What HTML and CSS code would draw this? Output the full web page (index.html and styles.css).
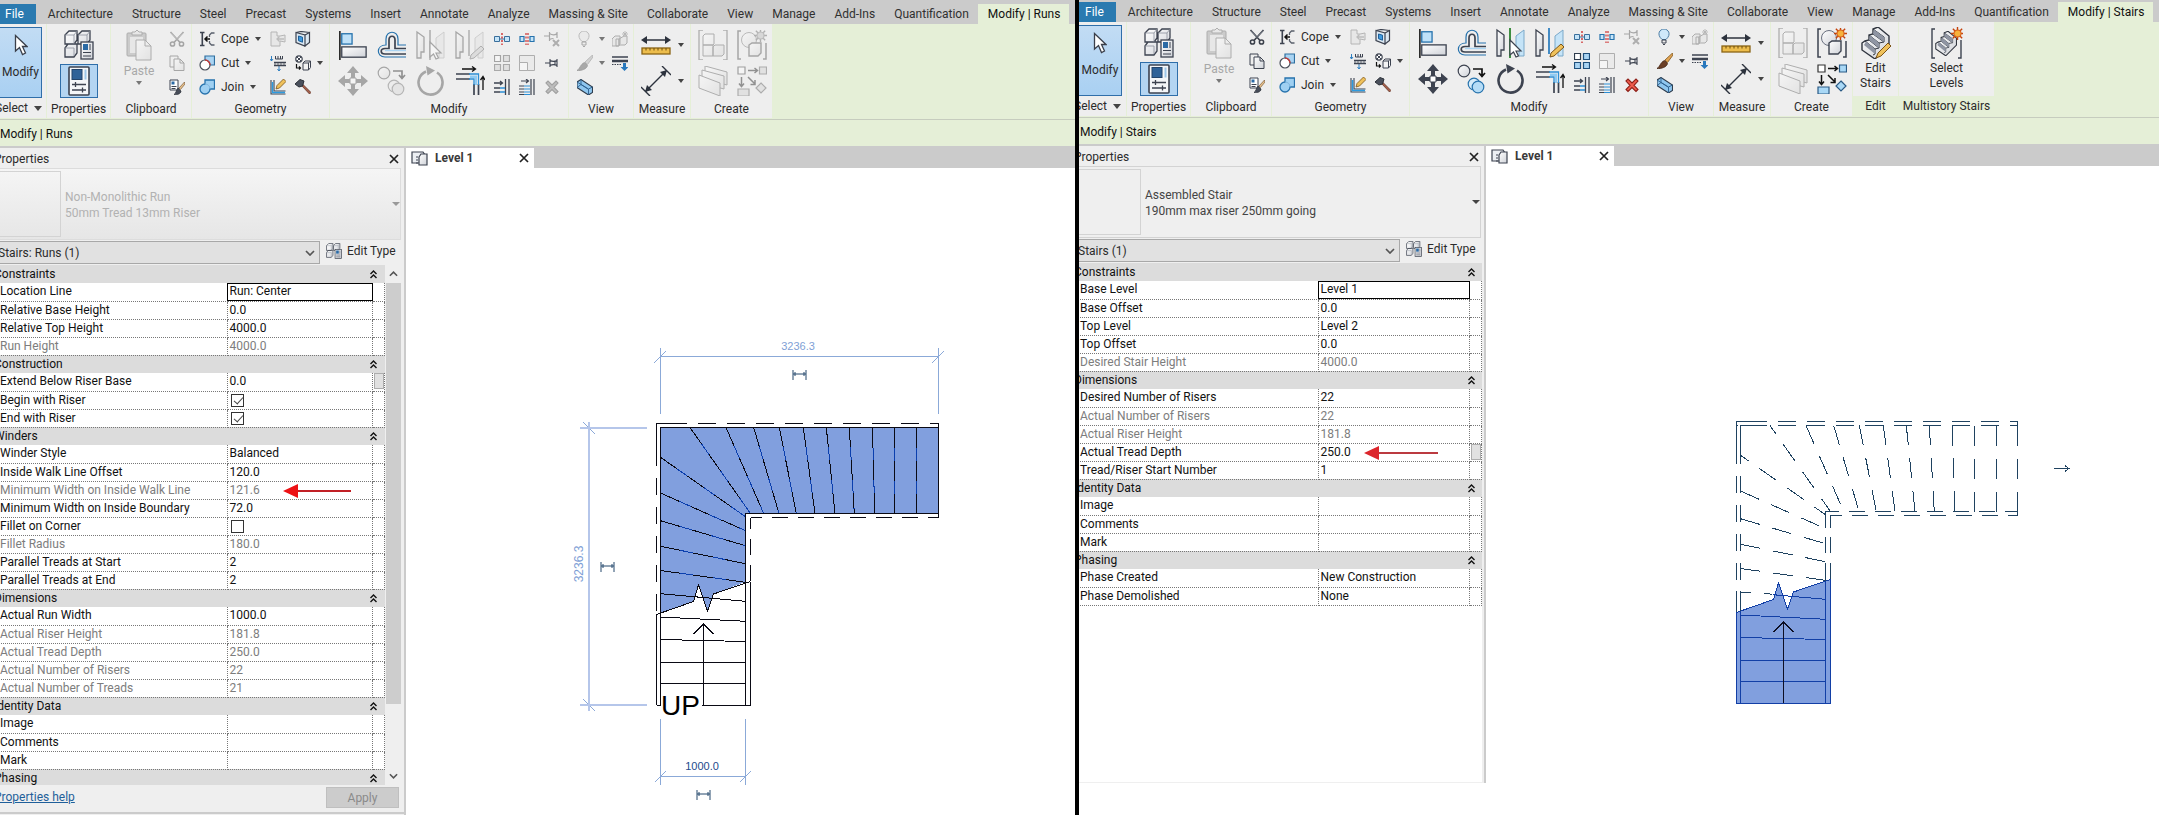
FILE: index.html
```html
<!DOCTYPE html>
<html lang="en">
<head>
<meta charset="utf-8">
<title>Modify Runs and Stairs</title>
<link rel="stylesheet" href="styles.css">
</head>
<body>
<svg class="defs" aria-hidden="true">
<defs>
<linearGradient id="g" x1="0" y1="0" x2="1" y2="1"><stop offset="0" stop-color="#fff"/><stop offset="1" stop-color="#cfd2d8"/></linearGradient>
<symbol id="cursor" viewBox="0 0 14 22"><path d="M1.500 1.500V17l4-3.500 3 7 3-1.500-3-6.500H13z" fill="#fff" stroke="#3a3f4a" stroke-width="1.300"/></symbol>
<symbol id="cubes" viewBox="0 0 30 30"><g fill="url(#g)" stroke="#3d4350" stroke-width="1.300"><path d="M1 5l4-4h8v9l-3 4H1zM14 5l4-4h8v9l-3 4h-9zM1 18l3-4h9v9l-3 4H1z"/><path d="M1 5h9v9M10 5l3-4M14 5h9v9M23 5l3-4M1 18h9v8" fill="none" stroke="#8a909c" stroke-width=".8"/><rect x="17" y="12" width="12" height="17"/></g><rect x="19" y="14" width="5" height="6" fill="#2b6aa5"/><path d="M26 14v6M19 22.500h8M19 26h8" stroke="#3d4350"/></symbol>
<symbol id="propsheet" viewBox="0 0 22 30"><rect x="1" y="1" width="20" height="28" rx="1" fill="#f4f6f8" stroke="#3d4350" stroke-width="1.600"/><rect x="4" y="3.500" width="10" height="10" fill="#2f6298" stroke="#24456b"/><path d="M16.500 3.500h2v10h-2z" fill="#9dc6e8"/><path d="M4 18.500h14M7.500 16v5M4 24h14M14.500 21.500v5" stroke="#3d4350" stroke-width="1.300"/></symbol>
<symbol id="paste" viewBox="0 0 28 32"><rect x="2" y="4" width="19" height="23" rx="1" fill="#9a9a9a" stroke="#555"/><path d="M7 6V3h3l2-2 2 2h3v3z" fill="#ddd" stroke="#555"/><path d="M5 8h13v16H5z" fill="#ddd"/><path d="M11 11h9l6 6v14H11z" fill="url(#g)" stroke="#555"/><path d="M20 11v6h6" fill="none" stroke="#555"/></symbol>
<symbol id="cut" viewBox="0 0 16 16"><path d="M1.500 1l9.500 10.500M14.500 1L5 11.500" stroke="#3a3f4a" stroke-width="1.600"/><path d="M2 1.500l6 7 6-7" fill="none" stroke="#9aa0aa" stroke-width=".6"/><circle cx="3.500" cy="13" r="2.100" fill="none" stroke="#3a3f4a" stroke-width="1.500"/><circle cx="12.500" cy="13" r="2.100" fill="none" stroke="#3a3f4a" stroke-width="1.500"/></symbol>
<symbol id="copy" viewBox="0 0 16 16"><path d="M1 1h8v11H1z" fill="#eee" stroke="#3d4350"/><path d="M5 4h6l4 4v7.500H5z" fill="url(#g)" stroke="#3d4350"/><path d="M11 4v4h4" fill="none" stroke="#3d4350"/></symbol>
<symbol id="match" viewBox="0 0 16 16"><path d="M1 1h8v10H1z" fill="#fff" stroke="#3d4350"/><path d="M2.500 2.500h3v3h-3z" fill="#2b6aa5"/><path d="M2.500 7.500h5M2.500 9.500h4" stroke="#3d4350"/><path d="M15.500 3L10 9l1.500 1.500L16 5z" fill="#e7c08a" stroke="#6a4a28" stroke-width=".6"/><path d="M9 9l3 3c0 3-4 4-7 3.500 2-1 2-4 4-6.500z" fill="#474d59" stroke="#2a2e36" stroke-width=".7"/></symbol>
<symbol id="cope" viewBox="0 0 16 16"><path d="M1 1.500h4.500M1 14.500h4.500M3.300 1.500v13" stroke="#3d4350" stroke-width="1.600"/><path d="M6 8h5M8.500 5.500L6 8l2.500 2.500" fill="none" stroke="#111" stroke-width="1.500"/><path d="M15.500 2h-3l-2 2v2M15.500 14h-3l-2-2v-2" fill="none" stroke="#5a606c" stroke-width="1.300"/></symbol>
<symbol id="cutg" viewBox="0 0 16 16"><path d="M6 1h9.500v9H6z" fill="#a9d4f3" stroke="#2f6f9f" stroke-width="1.200"/><circle cx="6" cy="10" r="5" fill="#fff" stroke="#4a4f5a" stroke-width="1.200"/><path d="M6 5a5 5 0 0 1 5 5" fill="none" stroke="#c23b3b" stroke-width="1.300"/></symbol>
<symbol id="join" viewBox="0 0 16 16"><path d="M6 1h9.500v9H11a5 5 0 1 1-5-5z" fill="#9fd0f2" stroke="#2773ad" stroke-width="1.300"/><path d="M6 5c3 0 5 2 5 5" fill="none" stroke="#7fb6de"/></symbol>
<symbol id="wallnotch" viewBox="0 0 16 16"><path d="M1 1h6v4h3l5-1v7l-5-1v5H1z" fill="#ddd" stroke="#666"/><path d="M14 8H7m2.500-2.500L7 8l2.500 2.500" stroke="#777" fill="none" stroke-width="1.300"/></symbol>
<symbol id="beam" viewBox="0 0 16 16"><path d="M1.500 1v5M0 4l1.500 2L3 4M9 11v5M7.500 14L9 16l1.500-2" stroke="#2d7fc1" fill="none"/><path d="M5.500 1v3h7V1M8 1v3M10.500 1v3" fill="none" stroke="#3d4350"/><path d="M4 7.500h12M4 10.500h12" stroke="#3d4350" stroke-width="1.300"/><path d="M4 9h12" stroke="#3d4350" stroke-width=".7" stroke-dasharray="2 1"/></symbol>
<symbol id="walljoin" viewBox="0 0 16 16"><path d="M1 1v14h14.500M4 1v11h11.500" fill="none" stroke="#3d4350" stroke-width="1.100"/><path d="M2.500 3v10.500H15" fill="none" stroke="#2d9be0" stroke-width="1.500"/><path d="M6 10l1-3.500L13.500 0 16 2.500 9.500 9z" fill="#efc15b" stroke="#7c5418" stroke-width=".8"/></symbol>
<symbol id="splitface" viewBox="0 0 16 16"><path d="M1 1.500L10 4v11L1 11.500zM10 4l4.500-2.500v10L10 15zM1 1.500L6 .5l8.500 1" fill="#dce8f2" stroke="#3d4350" stroke-width="1.200"/><path d="M3.500 5l4 1.200v5l-4-1.500z" fill="#3f9be0" stroke="#1e5f99"/></symbol>
<symbol id="solid" viewBox="0 0 16 16"><circle cx="4" cy="4" r="3.200" fill="#fff" stroke="#3d4350" stroke-width="1.200"/><path d="M2 2l4 4M6 2L2 6" stroke="#3d4350"/><path d="M1.500 9v4h4M4 11.500L5.500 13 4 14.500" fill="none" stroke="#111" stroke-width="1.200"/><path d="M8 8l2-2h5.500v6.500l-2 2.500H8zM8 8h5.500v7M13.500 8l2-2" fill="#f4f4f4" stroke="#3d4350"/></symbol>
<symbol id="hammer" viewBox="0 0 16 16"><path d="M6 6l8.500 9 1.500-1.500L7.500 5z" fill="#a9604a" stroke="#5d3528" stroke-width=".8"/><path d="M0 5L5 .5 9 2 7.500 7 4 8z" fill="#4a505c" stroke="#2c3038"/></symbol>
<symbol id="align" viewBox="0 0 30 32"><path d="M1 1v31" stroke="#111" stroke-width="1.600"/><rect x="3" y="4" width="11" height="11" fill="#bfe1f8" stroke="#2773ad" stroke-width="1.400"/><rect x="3" y="18" width="26" height="11" fill="url(#g)" stroke="#3d4350" stroke-width="1.400"/></symbol>
<symbol id="offset" viewBox="0 0 30 30"><g fill="none"><path d="M29 15h-8v-6c0-9-12-9-12 0v6C-1 15-1 27 8 27h21" stroke="#2773ad" stroke-width="1.200"/><path d="M29 18.500H18V10c0-5-6-5-6 0v8.500H8c-5 0-5 5.500 0 5.500h21" stroke="#3d4350" stroke-width="1.700"/><path d="M29 20.500H8" stroke="#a9d4f3" stroke-width="1.400"/></g></symbol>
<symbol id="mirrorp" viewBox="0 0 30 30"><path d="M1 2l7 5v15H5v6H1z" fill="url(#g)" stroke="#3d4350" stroke-width="1.300"/><path d="M28 2l-8 6v15h3v5h5z" fill="#c5e4f8" stroke="#7aa9c9"/><path d="M14 0v30" stroke="#3e8e41" stroke-width="2"/><path d="M14 12v15l3.500-3 2.500 5 2.500-1-2.500-5h5z" fill="#fff" stroke="#3d4350" stroke-width="1.200"/></symbol>
<symbol id="mirrord" viewBox="0 0 30 30"><path d="M1 2l7 5v15H5v6H1z" fill="url(#g)" stroke="#3d4350" stroke-width="1.300"/><path d="M28 2l-8 6v15h3v5h5z" fill="#c5e4f8" stroke="#7aa9c9"/><path d="M14 0v26" stroke="#2f7fbf" stroke-width="1.800"/><path d="M15 29l1-4 10-9 3 3-10 9z" fill="#efc15b" stroke="#7c5418"/></symbol>
<symbol id="move" viewBox="0 0 30 30"><path d="M15 0l6 7h-4v5h-4V7H9zM15 30l6-7h-4v-5h-4v5H9zM0 15l7-6v4h5v4H7v4zM30 15l-7-6v4h-5v4h5v4z" fill="#3d4350"/><path d="M12 12h6v6h-6z" fill="#fff" stroke="#3d4350"/></symbol>
<symbol id="copym" viewBox="0 0 30 30"><circle cx="7" cy="7" r="5.800" fill="url(#g)" stroke="#3d4350" stroke-width="1.200"/><path d="M16 5h9v6M22 9l3 3.500L28 9" fill="none" stroke="#111" stroke-width="1.700"/><circle cx="17" cy="20" r="5.800" fill="#d6ecfa" stroke="#2773ad" stroke-width="1.200"/><circle cx="21" cy="23" r="5.800" fill="#b5dcf6" stroke="#2773ad" stroke-width="1.200"/></symbol>
<symbol id="rotate" viewBox="0 0 30 30"><path d="M21 6.500A12 12 0 1 1 10 5.500" fill="none" stroke="#3d4350" stroke-width="2.600"/><path d="M10 0l9 4.500-7.500 5z" fill="#3d4350"/></symbol>
<symbol id="trim" viewBox="0 0 30 30"><path d="M1 8h14M1 13h14M19 18v11M23.500 18v11" stroke="#3d4350" stroke-width="1.700"/><path d="M14 8h9.500v11M14 13h5v6" fill="none" stroke="#2d8fd5" stroke-width="1.300"/><path d="M15 9.500h7V19h-2v-7h-5z" fill="#8fcbf3"/><path d="M7 3h13M17 .5L20.500 3 17 5.500M28 24V11M25.500 14l2.500-3.500L30 14" fill="none" stroke="#111" stroke-width="1.300"/></symbol>
<symbol id="split" viewBox="0 0 16 16"><path d="M.5 5.500h5v5h-5zM10.500 5.500h5v5h-5z" fill="#c5e4f8" stroke="#3a6f9c"/><path d="M6 8h4" stroke="#3a6f9c"/><path d="M8 2v12" stroke="#c22" stroke-dasharray="2 1.500" stroke-width="1.300"/></symbol>
<symbol id="splitgap" viewBox="0 0 16 16"><path d="M1 5.500h4v5H1zM11 5.500h4v5h-4z" fill="#c5e4f8" stroke="#2773ad" stroke-width="1.200"/><path d="M7 2v12M9 2v12" stroke="#c22" stroke-dasharray="2 1.500" stroke-width="1.100"/></symbol>
<symbol id="array" viewBox="0 0 16 16"><path d="M.5.500h6v6h-6z" fill="#fff" stroke="#2f3c4c" stroke-width="1.200"/><path d="M9.500.500h6v6h-6zM.5 9.500h6v6h-6zM9.500 9.500h6v6h-6z" fill="#a9d4f3" stroke="#20507c" stroke-width="1.200"/></symbol>
<symbol id="scale" viewBox="0 0 16 16"><path d="M.5.500h15v15h-15z" fill="#e4e4e4" stroke="#555"/><path d="M.5 7.500h8v8h-8z" fill="#fff" stroke="#555"/></symbol>
<symbol id="trims" viewBox="0 0 16 16"><path d="M0 4h8M6 2l2.500 2L6 6M0 9h6M0 13h6M11.500 0v16M15 0v16" fill="none" stroke="#3d4350" stroke-width="1.300"/><path d="M6 9h5M6 13h5" stroke="#2d8fd5" stroke-width="1.500"/></symbol>
<symbol id="trimm" viewBox="0 0 16 16"><path d="M2 2h7M7 0l2.500 2L7 4M0 7h5M0 10h5M0 13h5M0 15.500h5M12 0v16M15 0v16" fill="none" stroke="#3d4350" stroke-width="1.200"/><path d="M5 7h6M5 10h6M5 13h6M5 15.500h6" stroke="#2d8fd5" stroke-width="1.200"/></symbol>
<symbol id="pin" viewBox="0 0 16 16"><path d="M1 8h5M6 4v8M13 4v8M6 5.500c2 1 5 1 7 0M6 10.500c2-1 5-1 7 0M11 6v4" fill="none" stroke="#3d4350" stroke-width="1.100"/></symbol>
<symbol id="unpin" viewBox="0 0 16 16"><path d="M0 5h5M5.500 1v9M13 1v6M5.500 2.500c3 2 5 2 7.500 0M5.500 8.500c2-1 3-1 4-1" fill="none" stroke="#444" stroke-width="1.200"/><path d="M9 9l6 6M15 9l-6 6" stroke="#555" stroke-width="2"/></symbol>
<symbol id="del" viewBox="0 0 16 16"><path d="M2 4l2-2 4 4 4-4 2 2-4 4.300 4 4.200-2 2-4-4-4 4-2-2 4-4.200z" fill="#ef5c4d" stroke="#8e2018" stroke-width="1.100"/></symbol>
<symbol id="bulb" viewBox="0 0 16 16"><path d="M5 10.500C-1 5 3 0 7 0s8 5 2 10.500z" fill="#cfe8fa" stroke="#4a7ba3"/><path d="M5 11h4v3H5zM6 15.500h2" fill="#eee" stroke="#3d4350"/></symbol>
<symbol id="displace" viewBox="0 0 16 16"><path d="M0 8l3-3h5v8l-1.500 2H0zM4 8h3v7H4zM7 8l5-3h3v7l-2 2H7z" fill="#ddd" stroke="#555"/><path d="M13 0v6M10 3h6M11 1l4 4M15 1l-4 4" stroke="#666" stroke-width=".9"/></symbol>
<symbol id="brush" viewBox="0 0 16 16"><path d="M15.500 0L8 7l2.500 2.500L16 2z" fill="#e2a455" stroke="#7c5418" stroke-width=".8"/><path d="M7.500 7.500l3 3C10 14 4 16 0 15.500c3-1.500 3-6 7.500-8z" fill="#6b3f27" stroke="#412313" stroke-width=".8"/></symbol>
<symbol id="linework" viewBox="0 0 16 16"><path d="M0 2h16" stroke="#3d4350" stroke-width="1.500"/><path d="M0 6h16" stroke="#3d4350" stroke-width="2.500"/><path d="M0 9.500h9" stroke="#3d4350" stroke-dasharray="1.500 1"/><path d="M11 8h3v4h2.500l-4 4-4-4H11z" fill="#2878bd"/></symbol>
<symbol id="box3d" viewBox="0 0 16 16"><path d="M0 3L4 .500 15.500 8v5.500L11.500 16 0 8.500z" fill="#8ec6ef" stroke="#2f3c4c" stroke-width="1.100"/><path d="M0 3l11.500 7 4-2M11.500 10v6M4 .500v5l-4 3M4 5.500l7 4.500" fill="none" stroke="#2b5e8c" stroke-width=".9"/></symbol>
<symbol id="measure" viewBox="0 0 30 30"><path d="M2 10h26" stroke="#2c323d" stroke-width="1.500"/><path d="M0 10l6-4v8zM30 10l-6-4v8z" fill="#2c323d"/><rect x="1" y="18" width="28" height="6" fill="#edbd4c" stroke="#8a6415" stroke-width="1.300"/><path d="M5 18v2.500M9 18v2.500M13 18v2.500M17 18v2.500M21 18v2.500M25 18v2.500" stroke="#6e4e0d"/></symbol>
<symbol id="dim" viewBox="0 0 30 30"><path d="M5 25L25 5M0 21l9 9M21 0l9 9" stroke="#2c323d" stroke-width="1.400"/><path d="M4 26l2-7 5 5zM26 4l-2 7-5-5z" fill="#2c323d"/></symbol>
<symbol id="group" viewBox="0 0 30 30"><path d="M5 0H1v30h4M25 0h4v30h-4" fill="none" stroke="#555" stroke-width="1.300"/><path d="M5 6l2-2h9v10l-1 1H5zM5 15h10v11H5zM15 17l2-2h9v9l-2 2h-9z" fill="url(#g)" stroke="#555"/></symbol>
<symbol id="similar" viewBox="0 0 30 30"><path d="M4 1H1v28h3M26 29h3V13" fill="none" stroke="#3d4350" stroke-width="1.500"/><circle cx="12" cy="10" r="7.500" fill="url(#g)" stroke="#6a7080"/><path d="M12 15l3-2h9v10l-3 3h-9z" fill="url(#g)" stroke="#3d4350" stroke-width="1.400"/><use href="#spark" x="17" y="-1" width="13" height="13"/></symbol>
<symbol id="spark" viewBox="0 0 14 14"><path d="M7 0v14M0 7h14M2 2l10 10M12 2L2 12" stroke="#c4420c" stroke-width="1.500"/><circle cx="7" cy="7" r="3.800" fill="#f7b23c" stroke="#d8611a" stroke-width="1.200"/></symbol>
<symbol id="assembly" viewBox="0 0 30 30"><g fill="url(#g)" stroke="#555"><path d="M7 0l22 6v13L7 13z"/><path d="M4 4l22 6v13L4 17z"/><path d="M1 9l21 8v13L1 22z" /></g></symbol>
<symbol id="flow" viewBox="0 0 30 30"><path d="M1 1h7v7H1z" fill="#fff" stroke="#333" stroke-width="1.200"/><path d="M11 4.500h9M17.500 2l3 2.500-3 2.500M4.500 11v9M2 17.500l2.500 3 2.500-3M11 11l7 7M18 14v4.500h-4.500" fill="none" stroke="#111" stroke-width="1.500"/><path d="M22.500 1h7v7h-7zM1 23h11v7H1zM24 17l5 5-5 5-5-5z" fill="#a9d8f6" stroke="#2a5a85" stroke-width="1.200"/></symbol>
<symbol id="stairs" viewBox="0 0 30 32"><path d="M1 16L1 23 14 32 28 18V9L17 0 12 2v5l-4 1v5l-4 1z" fill="url(#g)" stroke="#30353f" stroke-width="1.400"/><path d="M12 2l11 8v5l-5 1v5l-4 1v5l-2 1M12 7l11 8M8 8l10 8M8 13l10 8M4 14l10 8" fill="none" stroke="#30353f"/><path d="M13 2.500l10 7.500v5l-11-8zM9 8.500l9 7.500v5L8 13zM5 14.500l9 7.500v5L3 18z" fill="#8f95a3"/></symbol>
<symbol id="editstairs" viewBox="0 0 30 32"><use href="#stairs" width="30" height="32"/><path d="M15 31l2-5 10-10 3 3-10 10z" fill="#efc15b" stroke="#7c5418"/></symbol>
<symbol id="levels" viewBox="0 0 32 32"><path d="M4 2H1v29h3M27 31h3V13" fill="none" stroke="#3d4350" stroke-width="1.400"/><use href="#stairs" x="4" y="4" width="23" height="25"/><use href="#spark" x="20" y="0" width="13" height="13"/></symbol>
<symbol id="plan" viewBox="0 0 17 15"><path d="M1 1h11l2 3v8H1z" fill="#eceff3" stroke="#3d4350" stroke-width="1.200"/><path d="M8 6l2-3h6v11H8z" fill="url(#g)" stroke="#3d4350" stroke-width="1.200"/><path d="M6 5v8" stroke="#3d4350" stroke-dasharray="2 1"/></symbol>
<symbol id="x" viewBox="0 0 10 10"><path d="M1 1l8 8M9 1L1 9" stroke="#222" stroke-width="1.700"/></symbol>
<symbol id="chev" viewBox="0 0 10 6"><path d="M1 1l4 4 4-4" fill="none" stroke="#555" stroke-width="1.700"/></symbol>
<symbol id="fold" viewBox="0 0 7 9"><path d="M.5 4l3-3 3 3M.5 8l3-3 3 3" fill="none" stroke="#111" stroke-width="1.400"/></symbol>
<symbol id="hdim" viewBox="0 0 15 11"><path d="M1 0v10M14 0v10M1 4h13M3 2v4M12 2v4" stroke="#24496d" fill="none"/></symbol>
</defs>
</svg>

<main class="compare">
<section class="app" aria-label="Modify Runs">
<nav class="tabs"><button class="file">File</button><button>Architecture</button><button>Structure</button><button>Steel</button><button>Precast</button><button>Systems</button><button>Insert</button><button>Annotate</button><button>Analyze</button><button>Massing &amp; Site</button><button>Collaborate</button><button>View</button><button>Manage</button><button>Add-Ins</button><button>Quantification</button><button class="on">Modify | Runs</button></nav>
<div class="ribbon">
<section class="group select"><div class="tools"><button class="modify"><svg><use href="#cursor"/></svg>Modify</button></div><h2>Select <i class="tri"></i></h2></section>
<section class="group props"><div class="tools"><div class="big"><button aria-label="Type properties"><svg><use href="#cubes"/></svg></button><button class="pressed" aria-label="Properties"><svg><use href="#propsheet"/></svg></button></div></div><h2>Properties</h2></section>
<section class="group clip"><div class="tools"><button class="paste off"><svg><use href="#paste"/></svg>Paste<i class="tri"></i></button><div class="small"><button class="off" aria-label="Cut"><svg><use href="#cut"/></svg></button><button class="off" aria-label="Copy"><svg><use href="#copy"/></svg></button><button aria-label="Match"><svg><use href="#match"/></svg></button></div></div><h2>Clipboard</h2></section>
<section class="group geom"><div class="tools"><div class="small named"><button><svg><use href="#cope"/></svg>Cope<i class="tri"></i></button><button><svg><use href="#cutg"/></svg>Cut<i class="tri"></i></button><button><svg><use href="#join"/></svg>Join<i class="tri"></i></button></div><div class="small"><button class="off" aria-label="Wall opening"><svg><use href="#wallnotch"/></svg></button><button aria-label="Beam joins"><svg><use href="#beam"/></svg></button><button aria-label="Wall joins"><svg><use href="#walljoin"/></svg></button></div><div class="small"><button aria-label="Split face"><svg><use href="#splitface"/></svg></button><button aria-label="Solid"><svg><use href="#solid"/></svg><i class="tri"></i></button><button aria-label="Demolish"><svg><use href="#hammer"/></svg></button></div></div><h2>Geometry</h2></section>
<section class="group mod"><div class="tools"><div class="big"><button aria-label="Align"><svg><use href="#align"/></svg></button><button class="off" aria-label="Move"><svg><use href="#move"/></svg></button><button aria-label="Offset"><svg><use href="#offset"/></svg></button><button class="off" aria-label="Copy"><svg><use href="#copym"/></svg></button><button class="off" aria-label="Mirror pick"><svg><use href="#mirrorp"/></svg></button><button class="off" aria-label="Rotate"><svg><use href="#rotate"/></svg></button><button class="off" aria-label="Mirror draw"><svg><use href="#mirrord"/></svg></button><button aria-label="Trim"><svg><use href="#trim"/></svg></button></div><div class="small"><button aria-label="Split"><svg><use href="#split"/></svg></button><button class="off" aria-label="Array"><svg><use href="#array"/></svg></button><button aria-label="Trim single"><svg><use href="#trims"/></svg></button></div><div class="small"><button aria-label="Split with gap"><svg><use href="#splitgap"/></svg></button><button class="off" aria-label="Scale"><svg><use href="#scale"/></svg></button><button aria-label="Trim multiple"><svg><use href="#trimm"/></svg></button></div><div class="small"><button class="off" aria-label="Unpin"><svg><use href="#unpin"/></svg></button><button aria-label="Pin"><svg><use href="#pin"/></svg></button><button class="off" aria-label="Delete"><svg><use href="#del"/></svg></button></div></div><h2>Modify</h2></section>
<section class="group view"><div class="tools"><div class="small wide"><button class="off" aria-label="Hide"><svg><use href="#bulb"/></svg><i class="tri"></i></button><button class="off" aria-label="Override"><svg><use href="#brush"/></svg><i class="tri"></i></button><button aria-label="Selection box"><svg><use href="#box3d"/></svg></button></div><div class="small"><button class="off" aria-label="Displace"><svg><use href="#displace"/></svg></button><button aria-label="Linework"><svg><use href="#linework"/></svg></button></div></div><h2>View</h2></section>
<section class="group meas"><div class="tools"><div class="big"><button aria-label="Measure"><svg><use href="#measure"/></svg><i class="tri"></i></button><button aria-label="Dimension"><svg><use href="#dim"/></svg><i class="tri"></i></button></div></div><h2>Measure</h2></section>
<section class="group create"><div class="tools"><div class="big"><button class="off" aria-label="Create group"><svg><use href="#group"/></svg></button><button class="off" aria-label="Create assembly"><svg><use href="#assembly"/></svg></button><button class="off" aria-label="Create similar"><svg><use href="#similar"/></svg></button><button class="off" aria-label="Create parts"><svg><use href="#flow"/></svg></button></div></div><h2>Create</h2></section>
</div>
<div class="options">Modify | Runs</div>
<div class="work">
<aside class="palette">
<header><h3>Properties</h3><button aria-label="Close properties"><svg><use href="#x"/></svg></button></header>
<button class="type dim"><span class="thumb"></span><span class="tname">Non-Monolithic Run<br>50mm Tread 13mm Riser</span><i class="tri"></i></button>
<div class="filter"><div class="combo"><select aria-label="Selection"><option>Stairs: Runs (1)</option></select><svg><use href="#chev"/></svg></div><button class="edit"><svg><use href="#cubes"/></svg>Edit Type</button></div>
<div class="sheet">
<table>
<colgroup><col class="c1"><col><col class="c3"></colgroup>
<tbody>
<tr class="h"><th colspan="2">Constraints</th><th><button aria-label="Collapse"><svg><use href="#fold"/></svg></button></th></tr>
<tr><td>Location Line</td><td class="focus">Run: Center</td><td></td></tr>
<tr><td>Relative Base Height</td><td>0.0</td><td></td></tr>
<tr><td>Relative Top Height</td><td>4000.0</td><td></td></tr>
<tr class="ro"><td>Run Height</td><td>4000.0</td><td></td></tr>
<tr class="h"><th colspan="2">Construction</th><th><button aria-label="Collapse"><svg><use href="#fold"/></svg></button></th></tr>
<tr><td>Extend Below Riser Base</td><td>0.0</td><td><button class="assoc" aria-label="Associate parameter"></button></td></tr>
<tr><td><label for="begin">Begin with Riser</label></td><td><input type="checkbox" id="begin" checked></td><td></td></tr>
<tr><td><label for="end">End with Riser</label></td><td><input type="checkbox" id="end" checked></td><td></td></tr>
<tr class="h"><th colspan="2">Winders</th><th><button aria-label="Collapse"><svg><use href="#fold"/></svg></button></th></tr>
<tr><td>Winder Style</td><td>Balanced</td><td></td></tr>
<tr><td>Inside Walk Line Offset</td><td>120.0</td><td></td></tr>
<tr class="ro"><td>Minimum Width on Inside Walk Line</td><td class="noted">121.6<svg class="note" viewBox="0 0 68 16"><path d="M13 8h55" stroke="#c22026" stroke-width="2"/><path d="M0 8l15-7v14z" fill="#ec1114"/></svg></td><td></td></tr>
<tr><td>Minimum Width on Inside Boundary</td><td>72.0</td><td></td></tr>
<tr><td><label for="fillet">Fillet on Corner</label></td><td><input type="checkbox" id="fillet"></td><td></td></tr>
<tr class="ro"><td>Fillet Radius</td><td>180.0</td><td></td></tr>
<tr><td>Parallel Treads at Start</td><td>2</td><td></td></tr>
<tr><td>Parallel Treads at End</td><td>2</td><td></td></tr>
<tr class="h"><th colspan="2">Dimensions</th><th><button aria-label="Collapse"><svg><use href="#fold"/></svg></button></th></tr>
<tr><td>Actual Run Width</td><td>1000.0</td><td></td></tr>
<tr class="ro"><td>Actual Riser Height</td><td>181.8</td><td></td></tr>
<tr class="ro"><td>Actual Tread Depth</td><td>250.0</td><td></td></tr>
<tr class="ro"><td>Actual Number of Risers</td><td>22</td><td></td></tr>
<tr class="ro"><td>Actual Number of Treads</td><td>21</td><td></td></tr>
<tr class="h"><th colspan="2">Identity Data</th><th><button aria-label="Collapse"><svg><use href="#fold"/></svg></button></th></tr>
<tr><td>Image</td><td></td><td></td></tr>
<tr><td>Comments</td><td></td><td></td></tr>
<tr><td>Mark</td><td></td><td></td></tr>
<tr class="h"><th colspan="2">Phasing</th><th><button aria-label="Collapse"><svg><use href="#fold"/></svg></button></th></tr>
</tbody></table>
<div class="scroll"><button aria-label="Scroll up"><svg class="flip"><use href="#chev"/></svg></button><div class="track"><div class="thumbbar"></div></div><button aria-label="Scroll down"><svg><use href="#chev"/></svg></button></div>
</div>
<footer><a href="#help">Properties help</a><button disabled>Apply</button></footer>
</aside>
<div class="viewport">
<div class="docs"><div class="doc"><svg class="plan"><use href="#plan"/></svg><span>Level 1</span><button aria-label="Close view"><svg><use href="#x"/></svg></button></div></div>
<div class="canvas">
<svg class="drawing" width="669" height="645" viewBox="406 168 669 645" role="img" aria-label="Stair plan with winder run selected">
<path d="M660.500 427.500H938.500V513.500H745.500V582L713.500 594 707.500 611 698.500 585 693.500 601.500 660.500 613z" fill="#819fde"/>
<g fill="none" stroke="#0b3fae"><path d="M726 427.500L763.700 513.500M753.700 427.500L779 513.500M779.300 427.500L796.300 513.500M803.300 427.500L815 513.500M826.300 427.500L835 513.500M849.300 427.500L854.300 513.500M872.500 427.500L874.700 513.500M894.500 427.500V513.500M916.500 427.500V513.500M938.500 427.500V513.500M690 427.500L750.500 513.500M660.500 457.300L745.500 516.700M660.500 493L745.500 530.700M660.500 520.700L745.500 545.700M660.500 546.300L745.500 563.700M660.500 570.500L745.500 582.300"/></g>
<g fill="none" stroke="#0a0a14">
<g class="rise"><path d="M726 427.500L763.700 513.500"/><path d="M753.700 427.500L779 513.500"/><path d="M779.300 427.500L796.300 513.500"/><path d="M803.300 427.500L815 513.500"/><path d="M826.300 427.500L835 513.500"/><path d="M849.300 427.500L854.300 513.500"/><path d="M872.500 427.500L874.700 513.500"/><path d="M894.500 427.500V513.500"/><path d="M916.500 427.500V513.500"/><path d="M938.500 427.500V513.500"/><path d="M690 427.500L750.500 513.500"/><path d="M660.500 457.300L745.500 516.700"/><path d="M660.500 493L745.500 530.700"/><path d="M660.500 520.700L745.500 545.700"/><path d="M660.500 546.300L745.500 563.700"/><path d="M660.500 570.500L745.500 582.300"/></g>
<path d="M660.500 705V427.500H938.500M938.500 513.500H745.500V705M938.500 423.500v94M656.500 465.500V423.500H685.500M750.500 581.500V705"/>
<path d="M660.500 593.700L745.500 601.300M660.500 617L745.500 621.300M660.500 639.500L745.500 641.500M660.500 662.500H745.500M660.500 683.500H745.500M656.500 705.500H661M702 705.500H751M656.500 614V705"/>
<path d="M656.500 614.500L693.500 601.500 698.500 585 707.500 611 713.500 594 750.500 581.500M703.500 705V624M693.500 634l10-10 10 10"/>
<path class="outer" d="M656.500 423.500H938.500"/><path class="outerv" d="M656.500 478V614"/>
<path class="inner" d="M750.500 517.500H938.500"/><path class="inner" d="M750.500 517.500V581"/>
</g>
<g fill="none" stroke="#8ba9d8"><path d="M660.500 348v66M938.500 348v66M660.500 356.500H938.500M654 363l12-12M932 363l12-12M660.500 719v66M745.500 719v66M660.500 776.500H745.500M655 782l11-11M740 782l11-11M583 422l12 12M583 699l12 12"/><path stroke="#b5c6ea" stroke-width="2" d="M589 422V711M580 428h67M580 705h67"/></g>
<text class="dt" x="798" y="350" text-anchor="middle">3236.3</text>
<text class="dt side" x="583" y="564" text-anchor="middle" transform="rotate(-90 583 564)">3236.3</text>
<text class="dt live" x="702" y="770" text-anchor="middle">1000.0</text>
<text class="up" x="661" y="715">UP</text>
<use href="#hdim" x="792" y="370" width="15" height="11"/><use href="#hdim" x="600" y="562" width="15" height="11"/><use href="#hdim" x="696" y="790" width="15" height="11"/>
</svg>
</div></div></div>
</section>

<section class="app second" aria-label="Modify Stairs">
<nav class="tabs"><button class="file">File</button><button>Architecture</button><button>Structure</button><button>Steel</button><button>Precast</button><button>Systems</button><button>Insert</button><button>Annotate</button><button>Analyze</button><button>Massing &amp; Site</button><button>Collaborate</button><button>View</button><button>Manage</button><button>Add-Ins</button><button>Quantification</button><button class="on">Modify | Stairs</button></nav>
<div class="ribbon">
<section class="group select"><div class="tools"><button class="modify"><svg><use href="#cursor"/></svg>Modify</button></div><h2>Select <i class="tri"></i></h2></section>
<section class="group props"><div class="tools"><div class="big"><button aria-label="Type properties"><svg><use href="#cubes"/></svg></button><button class="pressed" aria-label="Properties"><svg><use href="#propsheet"/></svg></button></div></div><h2>Properties</h2></section>
<section class="group clip"><div class="tools"><button class="paste off"><svg><use href="#paste"/></svg>Paste<i class="tri"></i></button><div class="small"><button aria-label="Cut"><svg><use href="#cut"/></svg></button><button aria-label="Copy"><svg><use href="#copy"/></svg></button><button aria-label="Match"><svg><use href="#match"/></svg></button></div></div><h2>Clipboard</h2></section>
<section class="group geom"><div class="tools"><div class="small named"><button><svg><use href="#cope"/></svg>Cope<i class="tri"></i></button><button><svg><use href="#cutg"/></svg>Cut<i class="tri"></i></button><button><svg><use href="#join"/></svg>Join<i class="tri"></i></button></div><div class="small"><button class="off" aria-label="Wall opening"><svg><use href="#wallnotch"/></svg></button><button aria-label="Beam joins"><svg><use href="#beam"/></svg></button><button aria-label="Wall joins"><svg><use href="#walljoin"/></svg></button></div><div class="small"><button aria-label="Split face"><svg><use href="#splitface"/></svg></button><button aria-label="Solid"><svg><use href="#solid"/></svg><i class="tri"></i></button><button aria-label="Demolish"><svg><use href="#hammer"/></svg></button></div></div><h2>Geometry</h2></section>
<section class="group mod"><div class="tools"><div class="big"><button aria-label="Align"><svg><use href="#align"/></svg></button><button aria-label="Move"><svg><use href="#move"/></svg></button><button aria-label="Offset"><svg><use href="#offset"/></svg></button><button aria-label="Copy"><svg><use href="#copym"/></svg></button><button aria-label="Mirror pick"><svg><use href="#mirrorp"/></svg></button><button aria-label="Rotate"><svg><use href="#rotate"/></svg></button><button aria-label="Mirror draw"><svg><use href="#mirrord"/></svg></button><button aria-label="Trim"><svg><use href="#trim"/></svg></button></div><div class="small"><button aria-label="Split"><svg><use href="#split"/></svg></button><button aria-label="Array"><svg><use href="#array"/></svg></button><button aria-label="Trim single"><svg><use href="#trims"/></svg></button></div><div class="small"><button aria-label="Split with gap"><svg><use href="#splitgap"/></svg></button><button class="off" aria-label="Scale"><svg><use href="#scale"/></svg></button><button aria-label="Trim multiple"><svg><use href="#trimm"/></svg></button></div><div class="small"><button class="off" aria-label="Unpin"><svg><use href="#unpin"/></svg></button><button aria-label="Pin"><svg><use href="#pin"/></svg></button><button aria-label="Delete"><svg><use href="#del"/></svg></button></div></div><h2>Modify</h2></section>
<section class="group view"><div class="tools"><div class="small wide"><button aria-label="Hide"><svg><use href="#bulb"/></svg><i class="tri"></i></button><button aria-label="Override"><svg><use href="#brush"/></svg><i class="tri"></i></button><button aria-label="Selection box"><svg><use href="#box3d"/></svg></button></div><div class="small"><button class="off" aria-label="Displace"><svg><use href="#displace"/></svg></button><button aria-label="Linework"><svg><use href="#linework"/></svg></button></div></div><h2>View</h2></section>
<section class="group meas"><div class="tools"><div class="big"><button aria-label="Measure"><svg><use href="#measure"/></svg><i class="tri"></i></button><button aria-label="Dimension"><svg><use href="#dim"/></svg><i class="tri"></i></button></div></div><h2>Measure</h2></section>
<section class="group create"><div class="tools"><div class="big"><button class="off" aria-label="Create group"><svg><use href="#group"/></svg></button><button class="off" aria-label="Create assembly"><svg><use href="#assembly"/></svg></button><button aria-label="Create similar"><svg><use href="#similar"/></svg></button><button aria-label="Create parts"><svg><use href="#flow"/></svg></button></div></div><h2>Create</h2></section>
<section class="group ctx editst"><div class="tools"><button class="tall"><svg><use href="#editstairs"/></svg>Edit<br>Stairs</button></div><h2>Edit</h2></section>
<section class="group ctx multi"><div class="tools"><button class="tall"><svg><use href="#levels"/></svg>Select<br>Levels</button></div><h2>Multistory Stairs</h2></section>
</div>
<div class="options">Modify | Stairs</div>
<div class="work">
<aside class="palette">
<header><h3>Properties</h3><button aria-label="Close properties"><svg><use href="#x"/></svg></button></header>
<button class="type"><span class="thumb"></span><span class="tname">Assembled Stair<br>190mm max riser 250mm going</span><i class="tri"></i></button>
<div class="filter"><div class="combo"><select aria-label="Selection"><option>Stairs (1)</option></select><svg><use href="#chev"/></svg></div><button class="edit"><svg><use href="#cubes"/></svg>Edit Type</button></div>
<div class="sheet">
<table>
<colgroup><col class="c1"><col><col class="c3"></colgroup>
<tbody>
<tr class="h"><th colspan="2">Constraints</th><th><button aria-label="Collapse"><svg><use href="#fold"/></svg></button></th></tr>
<tr><td>Base Level</td><td class="focus">Level 1</td><td></td></tr>
<tr><td>Base Offset</td><td>0.0</td><td></td></tr>
<tr><td>Top Level</td><td>Level 2</td><td></td></tr>
<tr><td>Top Offset</td><td>0.0</td><td></td></tr>
<tr class="ro"><td>Desired Stair Height</td><td>4000.0</td><td></td></tr>
<tr class="h"><th colspan="2">Dimensions</th><th><button aria-label="Collapse"><svg><use href="#fold"/></svg></button></th></tr>
<tr><td>Desired Number of Risers</td><td>22</td><td></td></tr>
<tr class="ro"><td>Actual Number of Risers</td><td>22</td><td></td></tr>
<tr class="ro"><td>Actual Riser Height</td><td>181.8</td><td></td></tr>
<tr><td>Actual Tread Depth</td><td class="noted">250.0<svg class="note" viewBox="0 0 74 16"><path d="M13 8h61" stroke="#bb3a40" stroke-width="2"/><path d="M0 8l15-7v14z" fill="#dc262c"/></svg></td><td><button class="assoc" aria-label="Associate parameter"></button></td></tr>
<tr><td>Tread/Riser Start Number</td><td>1</td><td></td></tr>
<tr class="h"><th colspan="2">Identity Data</th><th><button aria-label="Collapse"><svg><use href="#fold"/></svg></button></th></tr>
<tr><td>Image</td><td></td><td></td></tr>
<tr><td>Comments</td><td></td><td></td></tr>
<tr><td>Mark</td><td></td><td></td></tr>
<tr class="h"><th colspan="2">Phasing</th><th><button aria-label="Collapse"><svg><use href="#fold"/></svg></button></th></tr>
<tr><td>Phase Created</td><td>New Construction</td><td></td></tr>
<tr><td>Phase Demolished</td><td>None</td><td></td></tr>
</tbody></table>
</div>
</aside>
<div class="viewport">
<div class="docs"><div class="doc"><svg class="plan"><use href="#plan"/></svg><span>Level 1</span><button aria-label="Close view"><svg><use href="#x"/></svg></button></div></div>
<div class="canvas">
<svg class="drawing" width="669" height="645" viewBox="406 168 669 645" role="img" aria-label="Stair plan with whole stair selected">
<path d="M656.500 614.500L693.500 601.500 698.500 585 707.500 611 713.500 594 750.500 581.500V705.500H656.500z" fill="#819fde"/>
<g fill="none" stroke="#1f4260">
<g class="rise"><path d="M726 427.500L763.700 513.500"/><path d="M753.700 427.500L779 513.500"/><path d="M779.300 427.500L796.300 513.500"/><path d="M803.300 427.500L815 513.500"/><path d="M826.300 427.500L835 513.500"/><path d="M849.300 427.500L854.300 513.500"/><path d="M872.500 427.500L874.700 513.500"/><path d="M894.500 427.500V513.500"/><path d="M916.500 427.500V513.500"/><path d="M937.500 427.500V513.500"/><path d="M660.500 493L745.500 530.700"/><path d="M660.500 520.700L745.500 545.700"/><path d="M660.500 546.300L745.500 563.700"/><path d="M660.500 570.500L745.500 582.300"/></g>
<g class="diag"><path d="M690 427.500L750.500 513.500"/><path d="M660.500 457.300L745.500 516.700"/></g>
<path d="M656.500 465.500V423.500H685.500M660.500 465.500V427.500H685.500M937.500 423.500v5M937.500 513v4.500M745.500 530V513.500H757M750.500 530V517.500H761M660.500 594.500h10M684 595.500l8 .7M656.500 593v22M660.500 593v20M745.500 568v15M750.500 568v14"/>
<path class="outer" d="M656.500 423.500H938"/><path class="outer" d="M656.500 427.500H938"/><path class="outerv" d="M656.500 478V592"/><path class="outerv" d="M660.500 478V592"/>
<path class="inner" d="M750.500 517.500H938"/><path class="inner2" d="M745.500 513.500H938"/><path class="inner" d="M750.500 517.500V581"/><path class="inner" d="M745.500 517.500V581"/>
<path d="M974 470.500h15M985 467.500l4 3-4 3"/>
</g>
<g fill="none" stroke="#123fa6"><path d="M656.500 705.500V614.500L693.500 601.500 698.500 585 707.500 611 713.500 594 750.500 581.500V705.500zM660.500 613V705M745.500 583V705M693 596.700L745.500 601.300M660.500 617L745.500 621.300M660.500 639.500L745.500 641.500M660.500 662.500H745.500M660.500 683.500H745.500"/><path stroke="#0d0f24" d="M703.500 705V624M693.500 634l10-10 10 10"/></g>
</svg>
</div></div></div>
</section>
</main>
</body>
</html>
```
FILE: styles.css
```css
* { box-sizing: border-box; }
html, body { margin: 0; height: 100%; }
body { font: 12px/16px Roboto, "Open Sans", sans-serif; color: #2b2b2b; background: #000; }
button, select { font: inherit; color: inherit; background: none; border: 0; padding: 0; margin: 0; }
h2, h3 { margin: 0; font: inherit; }
svg { display: block; overflow: visible; }
.defs { position: absolute; width: 0; height: 0; }

.compare { display: grid; grid-template-columns: 215fr 4px 216fr; height: 100vh; overflow: hidden; }
.app { grid-column: 1; display: flex; flex-direction: column; min-width: 0; min-height: 0; overflow: hidden; background: #fff; }
.app.second { grid-column: 3; }

.tabs { display: flex; padding-top: 4px; height: 24px; background: #cbcbcb; flex: none; }
.second .tabs { padding-top: 2px; height: 22px; }
.tabs button { padding: 0 9px 0 10px; line-height: 20px; white-space: nowrap; flex: none; color: #303030; }
.tabs .file { background: #2a7ab0; color: #fff; padding: 0 12px 0 5px; margin-right: 2px; }
.second .tabs .file { padding-left: 6px; }
.tabs .on { background: #e5efd7; color: #111; }

.ribbon { display: flex; gap: 1px; height: 96px; flex: none; background: #e5efd7; border-bottom: 1px solid #c6ccbe; overflow: hidden; }
.group { display: flex; flex-direction: column; flex: none; background: #eee; margin-bottom: 1px; padding-top: 3px; }
.group h2 { text-align: center; line-height: 20px; white-space: nowrap; flex: 1; }
.tools { display: flex; height: 72px; }
.small { display: grid; grid-template-rows: repeat(3, 24px); width: 16px; align-items: center; }
.small button { display: flex; align-items: center; gap: 6px; height: 16px; }
.small svg { width: 16px; height: 16px; flex: none; }
.big { display: grid; grid-template-rows: 36px 36px; grid-auto-flow: column; grid-auto-columns: 30px; gap: 0 9px; align-items: center; }
.big button { display: flex; align-items: center; gap: 7px; }
.big svg { width: 30px; height: 30px; flex: none; }
.off svg { filter: grayscale(1) opacity(.42); }
.off { color: #a8a8a8; }
.tri { display: inline-block; flex: none; border: 3px solid transparent; border-top: 4px solid #444; border-bottom: 0; }
.off .tri { border-top-color: #777; }

.select { width: 46px; }
.modify { width: 42px; display: flex; flex-direction: column; align-items: center; gap: 8px; padding-top: 6px; background: linear-gradient(#c2dcf4, #a9d0f2); border: 1px solid #2f6ea9; border-left: 0; }
.modify svg { width: 14px; height: 22px; }
.second .select { width: 47px; }
.second .modify { width: 43px; }
.group.select h2 { text-align: left; margin-left: -5px; }
.select .tri { border-width: 5px 4px 0; margin-left: 3px; vertical-align: 1px; }
.props { width: 63px; }
.props .tools { justify-content: center; }
.props .big { grid-auto-columns: 38px; }
.props button { justify-content: center; height: 34px; }
.pressed { background: #b4d5f2; border: 1px solid #2f6ea9; }
.clip { width: 80px; }
.clip .tools { padding-left: 14px; gap: 16px; }
.paste { width: 28px; display: flex; flex-direction: column; align-items: center; padding-top: 2px; gap: 2px; }
.paste svg { width: 28px; height: 32px; }
.geom { width: 137px; }
.geom .tools { padding-left: 7px; gap: 9px; }
.geom .named { width: 62px; }
.mod { width: 238px; }
.mod .tools { padding-left: 8px; gap: 9px; }
.view { width: 64px; }
.view .tools { padding-left: 8px; gap: 7px; }
.view .wide { width: 28px; }
.meas { width: 56px; }
.meas .tools { padding-left: 7px; }
.create { width: 81px; }
.create .tools { padding-left: 7px; }
.tall { display: flex; flex-direction: column; align-items: center; line-height: 15px; padding-top: 2px; }
.tall svg { width: 32px; height: 32px; margin-bottom: 2px; }
.ctx .tools { justify-content: center; }
.ctx h2 { background: #e5efd7; }
.editst { width: 45px; }
.multi { width: 95px; }

.options { height: 28px; flex: none; line-height: 28px; background: #e5efd7; border-bottom: 2px solid #cbcbcb; color: #111; }
.second .options { padding-left: 1px; }

.work { display: flex; flex: 1; min-height: 0; }
.palette { display: flex; flex-direction: column; flex: none; width: 412px; margin-left: -6px; background: #efefef; border-right: 2px solid #cbcbcb; }
.palette header { display: flex; justify-content: space-between; align-items: center; height: 20px; padding: 2px 5px 0 0; }
.palette header svg, .doc button svg { width: 10px; height: 10px; }
.type { display: flex; align-items: center; text-align: left; height: 72px; margin-right: 3px; border: 1px solid #d3d3d3; border-left: 0; background: #efefef; color: #444; }
.type.dim { background: linear-gradient(#f5f5f5, #e6e6e6); color: #b2b2b2; border-color: #dcdcdc; }
.thumb { align-self: stretch; width: 67px; margin: 2px 0; border: 1px solid #d3d3d3; border-left: 0; }
.tname { flex: 1; padding: 2px 0 0 4px; }
.type .tri { border-width: 4px 4px 0; }
.dim .tri { border-top-color: #999; }
.filter { display: flex; height: 25px; padding-top: 1px; }
.combo { display: flex; align-items: center; width: 326px; height: 23px; background: #e1e1e1; border: 1px solid #a8a8a8; padding-right: 4px; }
.combo select { flex: 1; appearance: none; padding-left: 3px; outline: 0; }
.combo svg { width: 10px; height: 6px; }
.edit { display: flex; align-items: center; gap: 5px; margin-left: 6px; height: 19px; }
.edit svg { width: 16px; height: 16px; }

.sheet { display: flex; flex: 1; min-height: 0; overflow: hidden; }
table { border-collapse: collapse; table-layout: fixed; width: 391px; flex: none; align-self: flex-start; background: #fff; color: #111; }
.c1 { width: 233px; }
.c3 { width: 12px; }
tr { height: 18px; }
td, th { height: 18px; padding: 0 0 0 2px; font-weight: 400; text-align: left; line-height: 16px; white-space: nowrap; }
td { vertical-align: top; border-bottom: 1px dotted #777; border-right: 1px dotted #777; }
td:first-child { padding-left: 6px; }
.h { background: #dcdcdc; }
.h th { padding-left: 0; }
.h button { display: block; margin-left: -3px; }
.h svg { width: 7px; height: 9px; }
.ro { color: #7d7d7d; }
.focus { outline: 1px solid #000; outline-offset: -1px; }
td input { display: block; appearance: none; width: 13px; height: 13px; margin: 2px 1px 0; border: 1px solid #333; background: #fff; }
td input:checked::after { content: ""; display: block; width: 4px; height: 8px; margin: 0 0 0 4px; border: solid #444; border-width: 0 1px 1px 0; transform: rotate(42deg); }
.noted { position: relative; }
.note { position: absolute; left: 55px; top: 1px; height: 16px; }
.second .note { left: 45px; }
.assoc { display: block; width: 10px; height: 16px; margin-left: -1px; background: #e1e1e1; border: 1px solid #adadad; }
.scroll { display: flex; flex-direction: column; width: 15px; margin-left: 1px; }
.scroll button { height: 18px; display: flex; align-items: center; justify-content: center; flex: none; }
.scroll button svg { width: 9px; height: 6px; }
.scroll .flip { transform: rotate(180deg); }
.track { flex: 1; }
.thumbbar { height: 87%; background: #cdcdcd; }
.palette footer { display: flex; justify-content: space-between; height: 29px; padding: 2px 5px 5px 0; border-bottom: 2px solid #cbcbcb; flex: none; margin-bottom: 1px; }
footer a { color: #1f5f9a; line-height: 20px; }
footer button { width: 73px; height: 21px; background: #ccc; border: 1px solid #bfbfbf; color: #8a8a8a; }

.second .palette { margin: 0 0 32px -5px; }
.second table { width: 408px; }
.second .c1 { width: 244px; }
.second .sheet { background: #fff; margin-right: 2px; border-bottom: 1px solid #efefef; }
.second .h button { margin-left: -2px; }

.viewport { flex: 1; min-width: 0; display: flex; flex-direction: column; }
.docs { height: 20px; background: #cbcbcb; flex: none; }
.doc { display: flex; align-items: center; width: 128px; height: 20px; background: #fff; padding: 0 5px; font-weight: 700; color: #3a3a3a; }
.plan { width: 17px; height: 15px; margin-right: 7px; }
.doc span { flex: 1; }
.canvas { flex: 1; min-height: 0; overflow: hidden; background: #fff; }
.drawing path { shape-rendering: crispEdges; }
.rise path { stroke-dasharray: 20 13 20 13 20; }
.diag path { stroke-dasharray: 10 13 20 14 20 13 14; }
.outer { stroke-dasharray: 18 11; stroke-dashoffset: -12; }
.outerv { stroke-dasharray: 17 12; }
.inner { stroke-dasharray: 16 10; stroke-dashoffset: 5; }
.inner2 { stroke-dasharray: 16 10; stroke-dashoffset: 3; }
.dt { font: 11px "Liberation Sans", sans-serif; fill: #7f9fd6; }
.dt.side { font-size: 12px; }
.dt.live { fill: #234a8c; }
.up { font: 28px "Liberation Sans", sans-serif; fill: #000; }
```
